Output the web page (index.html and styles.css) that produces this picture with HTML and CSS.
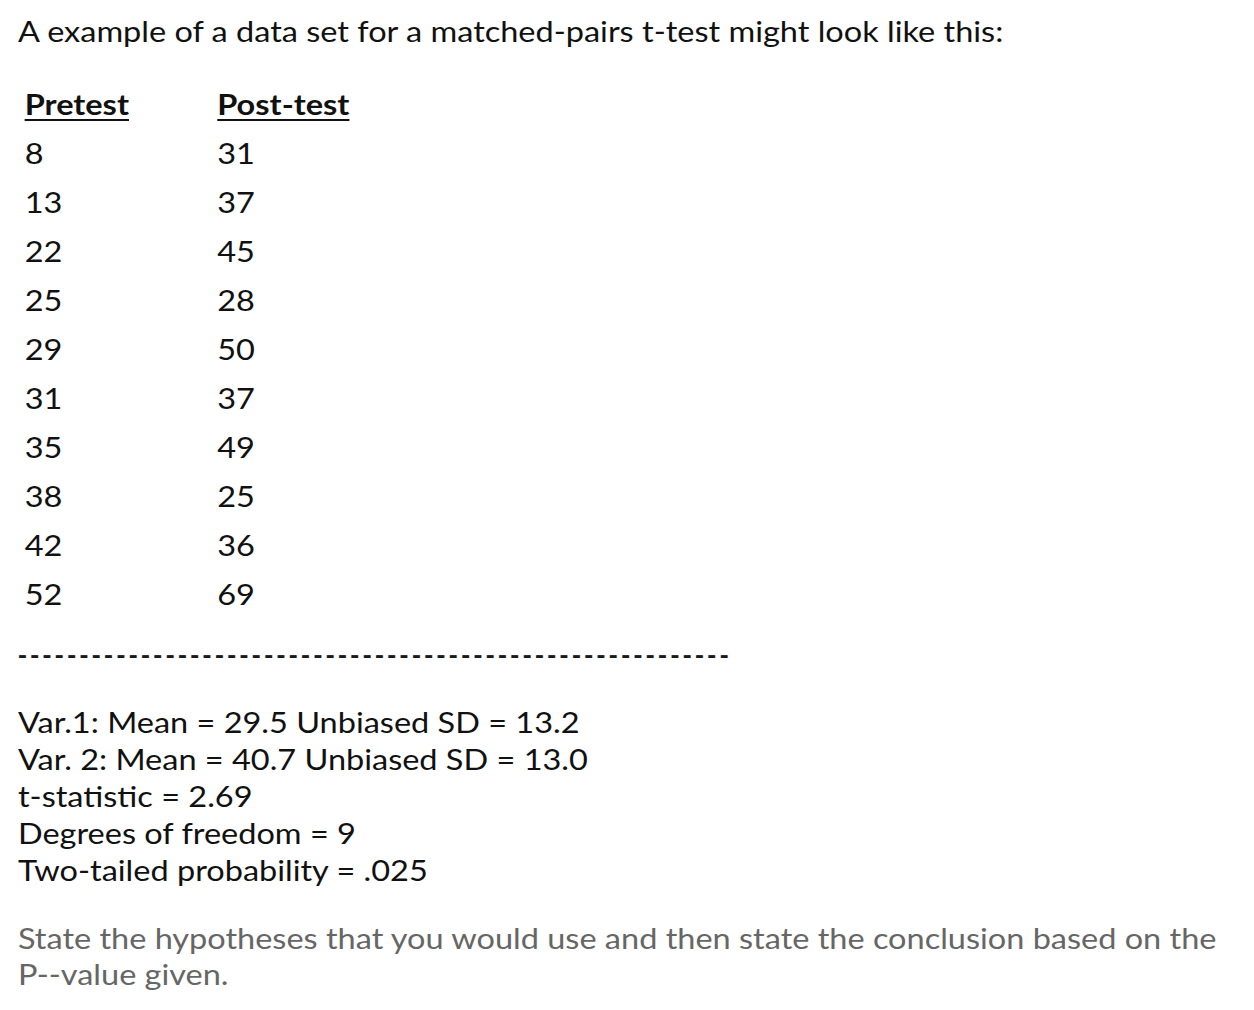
FILE: index.html
```html
<!DOCTYPE html>
<html>
<head>
<meta charset="utf-8">
<link rel="stylesheet" href="styles.css">
</head>
<body>
<div class="page">
  <p class="intro">A example of a data set for a matched-pairs t-test might look like this:</p>
  <div class="table">
    <div class="row head"><span class="c1">Pretest</span><span class="c2">Post-test</span></div>
    <div class="row"><span class="c1">8</span><span class="c2">31</span></div>
    <div class="row"><span class="c1">13</span><span class="c2">37</span></div>
    <div class="row"><span class="c1">22</span><span class="c2">45</span></div>
    <div class="row"><span class="c1">25</span><span class="c2">28</span></div>
    <div class="row"><span class="c1">29</span><span class="c2">50</span></div>
    <div class="row"><span class="c1">31</span><span class="c2">37</span></div>
    <div class="row"><span class="c1">35</span><span class="c2">49</span></div>
    <div class="row"><span class="c1">38</span><span class="c2">25</span></div>
    <div class="row"><span class="c1">42</span><span class="c2">36</span></div>
    <div class="row"><span class="c1">52</span><span class="c2">69</span></div>
  </div>
  <div class="dashes">----------------------------------------------------------</div>
  <div class="stats">
    <div>Var.1: Mean = 29.5 Unbiased SD = 13.2</div>
    <div>Var. 2: Mean = 40.7 Unbiased SD = 13.0</div>
    <div>t-statistic = 2.69</div>
    <div>Degrees of freedom = 9</div>
    <div>Two-tailed probability = .025</div>
  </div>
  <p class="question">State the hypotheses that you would use and then state the conclusion based on the P--value given.</p>
</div>
</body>
</html>
```

FILE: styles.css
```css
html, body {
  margin: 0;
  padding: 0;
  background: #ffffff;
  overflow: hidden;
}
body {
  font-family: Lato, "Open Sans", sans-serif;
  color: #111111;
}
.page {
  box-sizing: border-box;
  width: 1119px;
  padding: 11px 0 0 16px;
  transform: scaleX(1.12);
  transform-origin: 0 0;
}
.intro {
  margin: 0;
  font-size: 29px;
  line-height: 40px;
}
.table {
  margin-top: 28px;
  padding-left: 6px;
}
.row {
  display: flex;
  height: 49px;
  align-items: center;
  font-size: 29px;
}
.row .c1 {
  width: 172px;
}
.row.head {
  font-weight: bold;
  text-decoration: underline;
  text-underline-offset: 4px;
  text-decoration-thickness: 2px;
}
.dashes {
  margin-top: 22px;
  font-family: "Liberation Sans", Arial, sans-serif;
  font-weight: bold;
  font-size: 24px;
  letter-spacing: 3px;
  line-height: 30px;
  color: #1a1a1a;
  white-space: nowrap;
  overflow: hidden;
  width: 642px;
}
.stats {
  margin-top: 33px;
  font-size: 29px;
  line-height: 37px;
}
.question {
  margin: 32px 0 0 0;
  font-size: 29px;
  line-height: 36px;
  color: #666666;
}
```
